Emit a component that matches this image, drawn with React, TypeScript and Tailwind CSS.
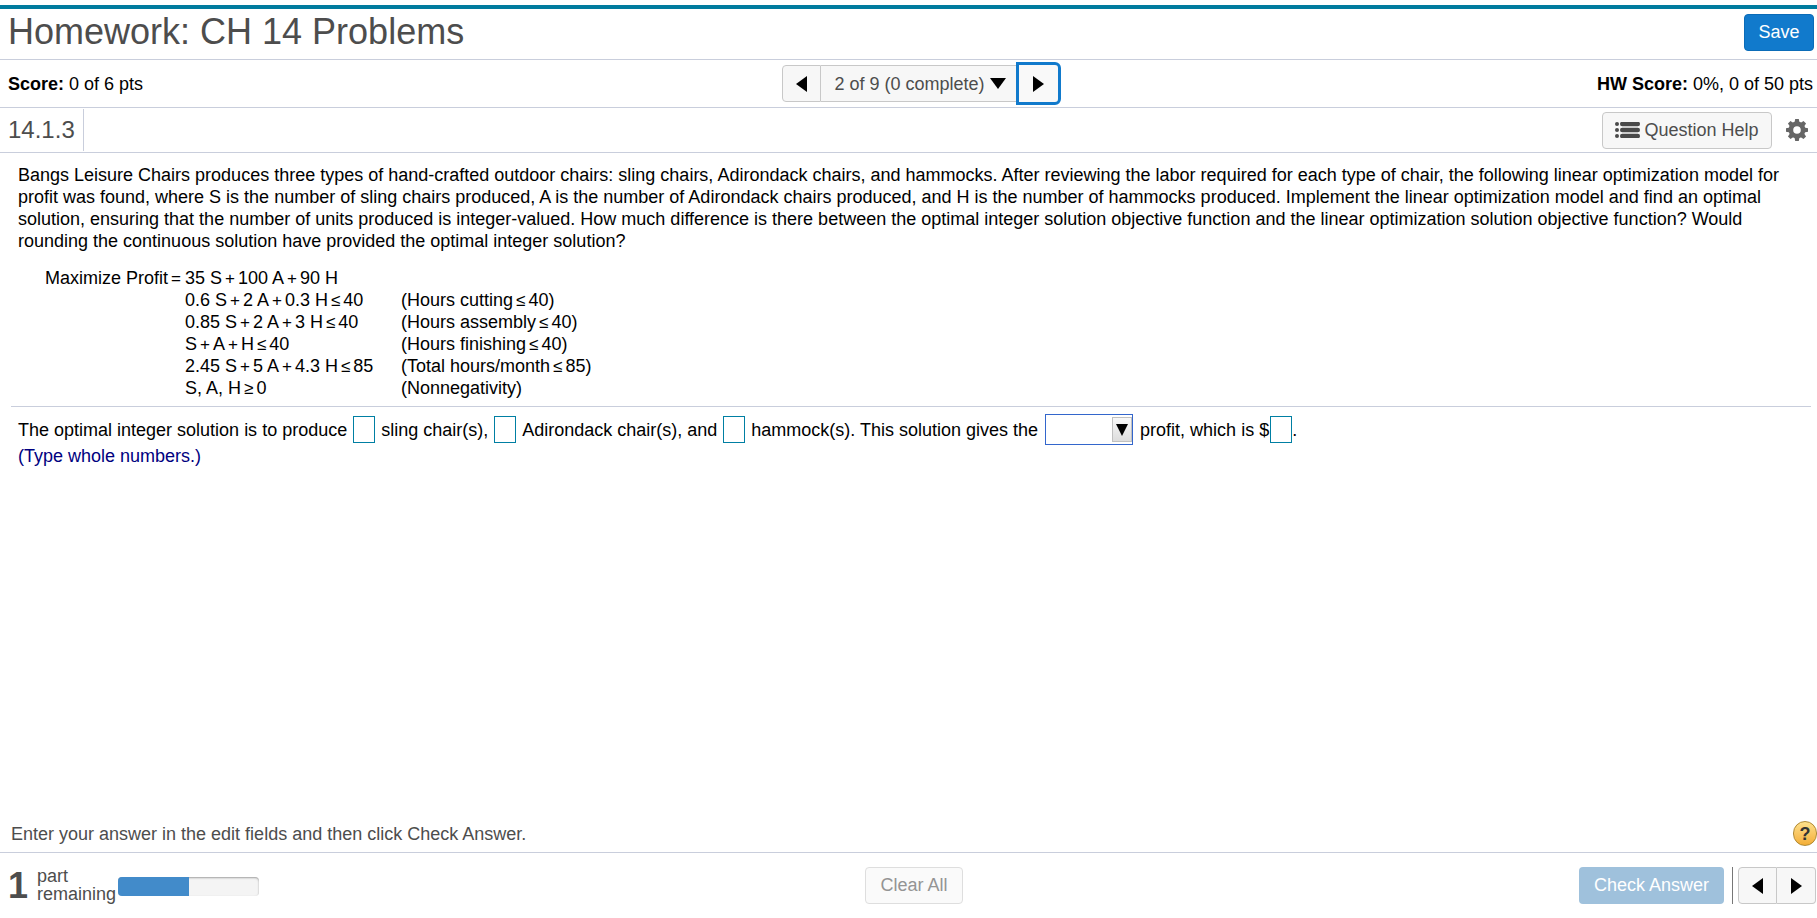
import { useState, type ReactNode } from "react";

const PARTS_TOTAL = 2;
const PARTS_DONE = 1;

function Op({ children }: { children: ReactNode }) {
  return <span className="mx-[3px] text-[17px] leading-none">{children}</span>;
}

function Triangle({ direction }: { direction: "left" | "right" | "down" }) {
  if (direction === "down") {
    return (
      <svg width="16" height="11" viewBox="0 0 16 11" aria-hidden="true">
        <path d="M0 0h16L8 11z" fill="#000" />
      </svg>
    );
  }

  return (
    <svg width="11" height="16" viewBox="0 0 11 16" aria-hidden="true">
      <path d={direction === "left" ? "M11 0v16L0 8z" : "M0 0v16l11-8z"} fill="#000" />
    </svg>
  );
}

function ListIcon() {
  return (
    <svg width="25" height="16" viewBox="0 0 25 16" fill="#4a4a4a" aria-hidden="true">
      {[2, 8, 14].map((y) => (
        <g key={y}>
          <circle cx="2" cy={y} r="2" />
          <rect x="5" y={y - 2.3} width="20" height="4.6" rx="2.3" />
        </g>
      ))}
    </svg>
  );
}

function GearIcon() {
  return (
    <svg width="22" height="22" viewBox="-11 -11 22 22" aria-hidden="true">
      {[0, 45, 90, 135].map((angle) => (
        <path
          key={angle}
          d="M-2.6 -7L-1.8 -11H1.8L2.6 -7V-5H-2.6zM-2.6 7L-1.8 11H1.8L2.6 7V5H-2.6z"
          fill="#666"
          transform={`rotate(${angle})`}
        />
      ))}
      <circle r="6.1" fill="none" stroke="#666" strokeWidth="4.6" />
    </svg>
  );
}

function AnswerBox({ label, value, onChange }: { label: string; value: string; onChange: (value: string) => void }) {
  return (
    <input
      type="text"
      aria-label={label}
      value={value}
      onChange={(e) => onChange(e.target.value)}
      className="h-[27px] w-[22px] border border-[#007fa3] bg-white text-center align-middle outline-none"
    />
  );
}

const model = [
  {
    label: <>Maximize Profit<Op>=</Op></>,
    formula: <>35 S<Op>+</Op>100 A<Op>+</Op>90 H</>,
    note: null,
  },
  {
    label: null,
    formula: <>0.6 S<Op>+</Op>2 A<Op>+</Op>0.3 H<Op>≤</Op>40</>,
    note: <>(Hours cutting<Op>≤</Op>40)</>,
  },
  {
    label: null,
    formula: <>0.85 S<Op>+</Op>2 A<Op>+</Op>3 H<Op>≤</Op>40</>,
    note: <>(Hours assembly<Op>≤</Op>40)</>,
  },
  {
    label: null,
    formula: <>S<Op>+</Op>A<Op>+</Op>H<Op>≤</Op>40</>,
    note: <>(Hours finishing<Op>≤</Op>40)</>,
  },
  {
    label: null,
    formula: <>2.45 S<Op>+</Op>5 A<Op>+</Op>4.3 H<Op>≤</Op>85</>,
    note: <>(Total hours/month<Op>≤</Op>85)</>,
  },
  {
    label: null,
    formula: <>S, A, H<Op>≥</Op>0</>,
    note: <>(Nonnegativity)</>,
  },
];

export default function App() {
  const [answers, setAnswers] = useState({ sling: "", adirondack: "", hammock: "", profit: "" });
  const [kind, setKind] = useState("");

  const setAnswer = (key: keyof typeof answers) => (value: string) =>
    setAnswers((prev) => ({ ...prev, [key]: value }));

  return (
    <div className="flex min-h-screen flex-col bg-white pt-[5px] font-['Liberation_Sans',Arial,sans-serif] text-[18px] leading-[22px] text-black">
      <header className="flex h-[55px] items-center justify-between border-t-4 border-b border-t-[#007b9e] border-b-[#c9cedc] pr-[3px] pb-1 pl-2">
        <h1 className="text-[36px] leading-[44px] text-[#4d4d4d]">Homework: CH 14 Problems</h1>
        <button type="button" className="h-[37px] w-[70px] rounded-sm border border-[#0b6cb8] bg-[#117acc] pb-px text-white">
          Save
        </button>
      </header>

      <div className="grid h-12 grid-cols-[1fr_auto_1fr] items-center border-b border-[#c9cedc] pr-1 pl-2">
        <p>
          <b>Score:</b> 0 of 6 pts
        </p>
        <nav className="ml-[22px] flex items-center text-[#4d4d4d]" aria-label="Questions">
          <button
            type="button"
            aria-label="Previous question"
            className="flex h-[37px] w-[39px] items-center justify-center rounded-l-sm border border-[#c8c8c8] bg-[#f7f7f7]"
          >
            <Triangle direction="left" />
          </button>
          <button type="button" className="flex h-[37px] items-center gap-[5px] border-y border-[#c8c8c8] bg-[#f7f7f7] pr-[10px] pl-[13px]">
            2 of 9 (0 complete)
            <Triangle direction="down" />
          </button>
          <button
            type="button"
            aria-label="Next question"
            className="flex h-[43px] w-[45px] items-center justify-center rounded-r-md border-3 border-[#117acc] bg-[#f9f9f9]"
          >
            <Triangle direction="right" />
          </button>
        </nav>
        <p className="text-right">
          <b>HW Score:</b> 0%, 0 of 50 pts
        </p>
      </div>

      <div className="flex h-[45px] items-center justify-between border-b border-[#c9cedc] pr-[9px]">
        <h2 className="flex h-[42px] items-center border-r border-[#c9cedc] pr-2 pl-2 text-[24px] text-[#4d4d4d]">14.1.3</h2>
        <div className="flex items-center gap-[14px]">
          <button
            type="button"
            className="flex h-[37px] w-[170px] items-center justify-center gap-1 rounded-sm border border-[#c8c8c8] bg-[#f7f7f7] text-[#4d4d4d]"
          >
            <ListIcon />
            Question Help
          </button>
          <button type="button" aria-label="Settings">
            <GearIcon />
          </button>
        </div>
      </div>

      <main className="flex-1 pt-[11px]">
        <p className="pr-7 pl-[18px]">
          Bangs Leisure Chairs produces three types of hand-crafted outdoor chairs: sling chairs, Adirondack chairs, and
          hammocks. After reviewing the labor required for each type of chair, the following linear optimization model for
          profit was found, where S is the number of sling chairs produced, A is the number of Adirondack chairs produced,
          and H is the number of hammocks produced. Implement the linear optimization model and find an optimal solution,
          ensuring that the number of units produced is integer-valued. How much difference is there between the optimal
          integer solution objective function and the linear optimization solution objective function? Would rounding the
          continuous solution have provided the optimal integer solution?
        </p>

        <table className="mt-[15px] ml-[45px]">
          <tbody>
            {model.map((row, i) => (
              <tr key={i}>
                <td className="w-[140px] p-0 whitespace-nowrap">{row.label}</td>
                <td className="w-[216px] p-0 whitespace-nowrap">{row.formula}</td>
                <td className="p-0 whitespace-nowrap">{row.note}</td>
              </tr>
            ))}
          </tbody>
        </table>

        <hr className="mt-[7px] mr-[6px] ml-[11px] border-[#c9cedc]" />

        <div className="mt-[7px] flex flex-wrap items-center pl-[18px]">
          <span className="mr-[6px]">The optimal integer solution is to produce</span>
          <AnswerBox label="Sling chairs" value={answers.sling} onChange={setAnswer("sling")} />
          <span className="mx-[6px]">sling chair(s),</span>
          <AnswerBox label="Adirondack chairs" value={answers.adirondack} onChange={setAnswer("adirondack")} />
          <span className="mx-[6px]">Adirondack chair(s), and</span>
          <AnswerBox label="Hammocks" value={answers.hammock} onChange={setAnswer("hammock")} />
          <span className="mr-[7px] ml-[6px]">hammock(s). This solution gives the</span>
          <span className="relative inline-flex">
            <select
              aria-label="Kind of profit"
              value={kind}
              onChange={(e) => setKind(e.target.value)}
              className="h-[31px] w-[88px] appearance-none border border-[#3366cc] bg-white pl-1 outline-none"
            >
              <option value=""></option>
              <option value="maximum">maximum</option>
              <option value="minimum">minimum</option>
            </select>
            <span className="pointer-events-none absolute top-[3px] right-px flex h-[25px] w-5 items-center justify-center border border-[#c0c0c0] bg-linear-to-b from-[#f8f8f8] to-[#dddddd]">
              <svg width="12" height="12" viewBox="0 0 12 12" aria-hidden="true">
                <path d="M0 0h12L6 12z" fill="#000" />
              </svg>
            </span>
          </span>
          <span className="ml-[7px] pr-px">profit, which is $</span>
          <AnswerBox label="Profit in dollars" value={answers.profit} onChange={setAnswer("profit")} />
          <span>.</span>
        </div>
        <p className="pl-[18px] text-[#000080]">(Type whole numbers.)</p>
      </main>

      <div className="flex h-[38px] items-center justify-between border-b border-[#c9cedc] pl-[11px] text-[#4d4d4d]">
        <p>Enter your answer in the edit fields and then click Check Answer.</p>
        <button
          type="button"
          aria-label="Help"
          className="h-[25px] w-6 rounded-full border border-[#b08a35] bg-linear-to-b from-[#fde08a] to-[#f3ae35] text-[18px] leading-[22px] font-bold text-[#333]"
        >
          ?
        </button>
      </div>

      <footer className="grid h-[65px] grid-cols-[1fr_auto_1fr] items-center pr-px pl-2 text-[#4d4d4d]">
        <div className="flex items-center">
          <b className="w-[29px] text-[36px] leading-[36px]">1</b>
          <label htmlFor="progress" className="w-[81px] pb-[2px] leading-[18px]">
            part remaining
          </label>
          <div
            id="progress"
            role="progressbar"
            aria-label="Parts completed"
            aria-valuenow={PARTS_DONE}
            aria-valuemax={PARTS_TOTAL}
            className="mt-[2px] h-[19px] w-[141px] overflow-hidden rounded-sm bg-[#f4f4f4] shadow-[inset_0_1px_2px_rgba(0,0,0,0.35)]"
          >
            <div className="h-full bg-[#428bca]" style={{ width: `${(PARTS_DONE / PARTS_TOTAL) * 100}%` }} />
          </div>
        </div>
        <button type="button" disabled className="ml-1 h-[37px] w-[98px] rounded-sm border border-[#dedede] bg-[#fafafa] pb-px text-[#949494]">
          Clear All
        </button>
        <div className="flex items-center justify-end">
          <button type="button" disabled className="h-[37px] w-[145px] rounded-sm bg-[#9fc1dc] pb-px text-white">
            Check Answer
          </button>
          <div className="ml-2 h-[37px] border-l border-[#777]" />
          <div className="ml-[5px] flex">
            <button
              type="button"
              aria-label="Previous"
              className="flex h-[37px] w-[39px] items-center justify-center rounded-l-sm border border-[#c8c8c8] bg-[#f7f7f7]"
            >
              <Triangle direction="left" />
            </button>
            <button
              type="button"
              aria-label="Next"
              className="flex h-[37px] w-[39px] items-center justify-center rounded-r-sm border border-l-0 border-[#c8c8c8] bg-[#f7f7f7]"
            >
              <Triangle direction="right" />
            </button>
          </div>
        </div>
      </footer>
    </div>
  );
}
